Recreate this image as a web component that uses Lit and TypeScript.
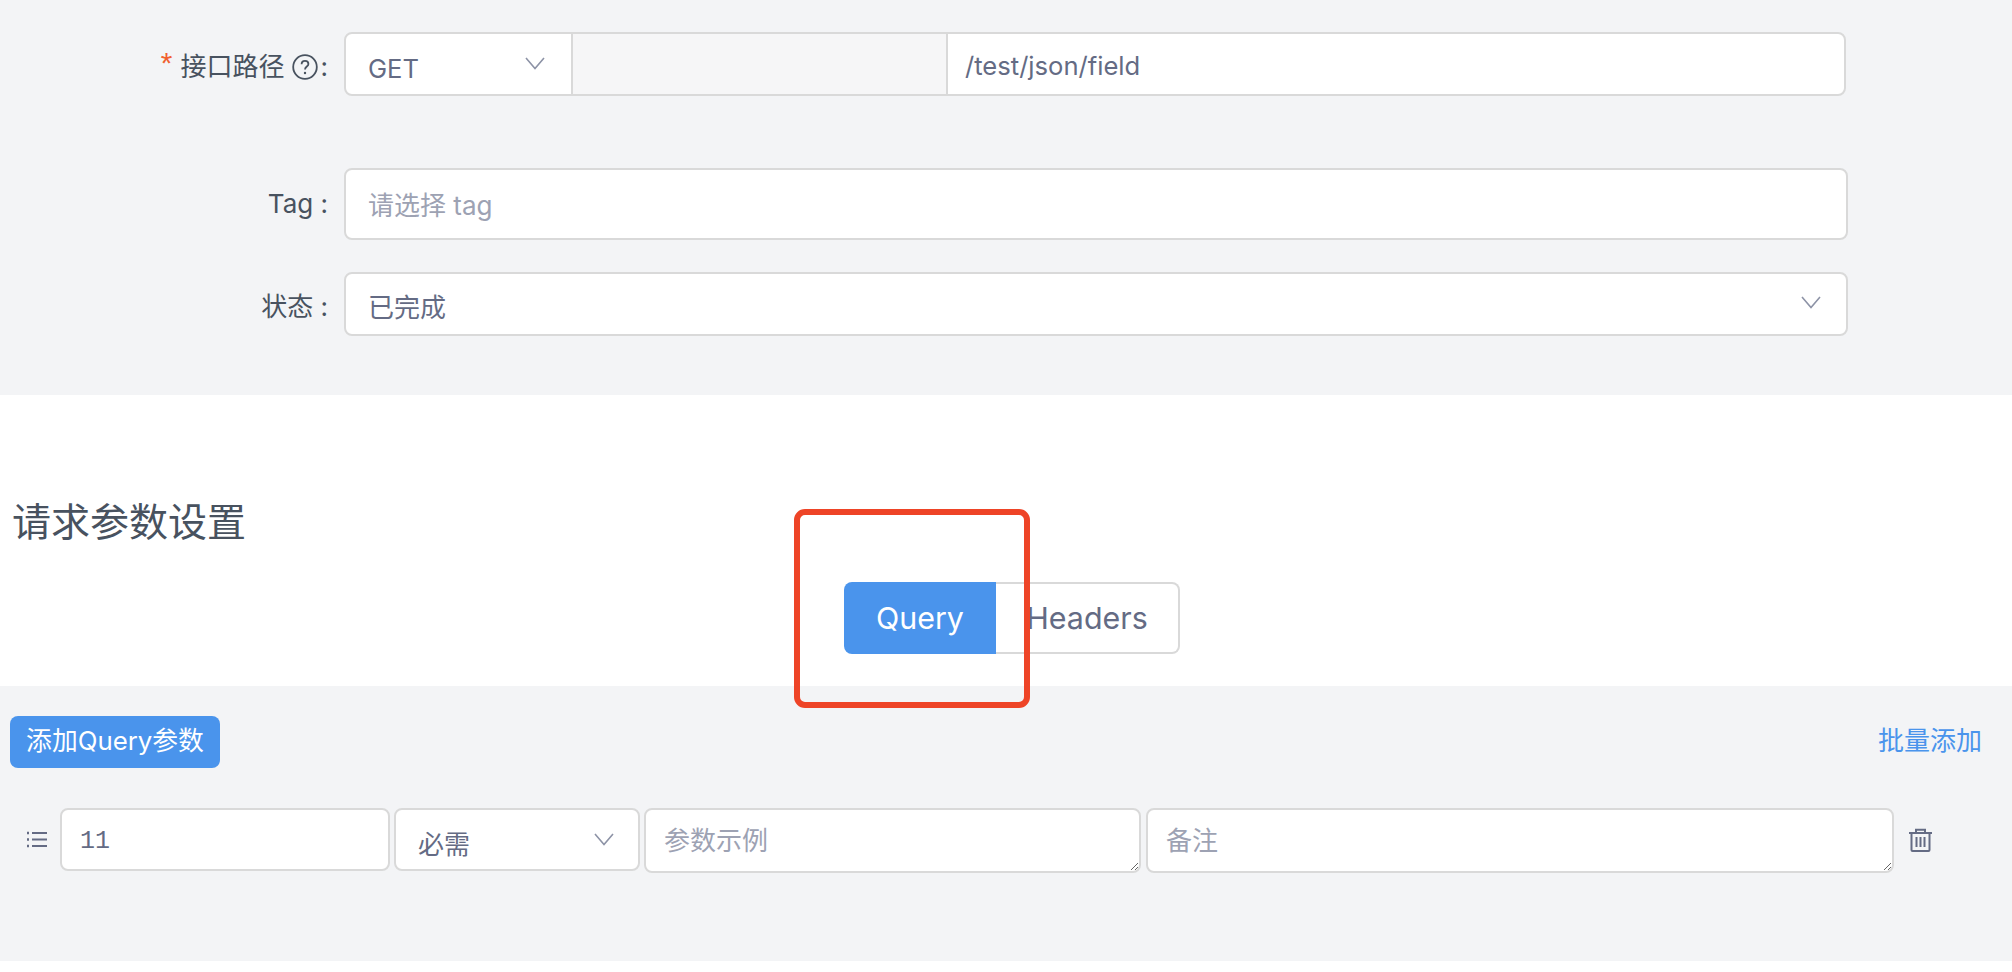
import { LitElement, html, css, svg } from "lit";
import { customElement } from "lit/decorators.js";

const chevron = html`<svg class="chev" width="20" height="13" viewBox="0 0 20 13" fill="none" stroke="#8d93a6" stroke-width="1.6"><path d="M1 1l9 10.5L19 1"/></svg>`;

@customElement("app-root")
export class AppRoot extends LitElement {
  static styles = css`
    :host {
      display: block;
      position: relative;
      height: 972px;
      overflow: hidden;
      background: #fff;
      font-family: Inter, "Noto Sans CJK SC", sans-serif;
      color: #646b84;
      font-size: 26px;
    }
    * { box-sizing: border-box; }
    .top {
      height: 395px;
      background: #f3f4f6;
      padding-top: 32px;
      display: flex;
      flex-direction: column;
    }
    .row { display: flex; align-items: center; }
    .row1 { height: 64px; }
    .row2 { height: 72px; margin-top: 72px; }
    .row3 { height: 64px; margin-top: 32px; }
    .label {
      width: 328px;
      margin-right: 16px;
      flex: none;
      display: flex;
      justify-content: flex-end;
      align-items: center;
      color: #48525f;
      font-size: 26px;
      line-height: 36px;
      white-space: nowrap;
    }
    .row1 .label { padding-top: 6px; }
    .row3 .label { padding-top: 6px; }
    .req { color: #f0602f; margin-right: 5px; font-size: 30px; line-height: 20px; font-family: "Liberation Mono", monospace; }
    .help { margin: 0 3px 0 7px; display: block; }
    .box {
      background: #fff;
      border: 2px solid #d9d9d9;
      border-radius: 8px;
      color: #646b84;
    }
    .group { width: 1502px; height: 64px; display: flex; overflow: hidden; }
    .method {
      width: 225px; flex: none; display: flex; justify-content: space-between;
      padding: 17px 26px 0 22px; line-height: 36px; font-size: 25.6px;
    }
    .method .chev { margin-top: 6px; }
    .prefix { width: 377px; flex: none; background: #f6f6f7; border-left: 2px solid #d9d9d9; border-right: 2px solid #d9d9d9; }
    .path {
      flex: 1; min-width: 0; border: 0; outline: 0; padding: 2px 17px 0; background: transparent;
      font: inherit; font-size: 25.6px; color: #646b84; height: 60px;
    }
    .wide { width: 1504px; }
    input.field, textarea.field {
      font: inherit; outline: 0; display: block;
    }
    input::placeholder, textarea::placeholder { color: #9da2b3; opacity: 1; }
    input.tag { height: 72px; padding: 2px 22px 0; }
    .sel {
      display: flex; justify-content: space-between; align-items: flex-start;
      height: 64px; line-height: 40px;
    }
    .status { padding: 14px 25px 0 22px; }
    .status .chev { margin-top: 8px; }
    .mid { height: 291px; display: flex; flex-direction: column; }
    h2 {
      margin: 0; padding: 101px 0 0 12px;
      font-size: 39px; line-height: 52px; font-weight: 400; color: #48525f;
    }
    .tabs { display: flex; margin: 34px 0 0 844px; }
    .tab {
      height: 72px; display: flex; align-items: center; justify-content: center;
      font-size: 30.4px; line-height: 40px;
    }
    .tab.on { width: 152px; background: #4a94ec; color: #fff; border-radius: 8px 0 0 8px; }
    .tab.off {
      width: 184px; background: #fff; color: #646b84;
      border: 2px solid #d9d9d9; border-left: 0; border-radius: 0 8px 8px 0;
    }
    .params { height: 275px; background: #f3f4f6; padding: 30px 0 0 0; }
    .bar { display: flex; justify-content: space-between; align-items: center; height: 52px; padding: 0 30px 0 10px; }
    .add {
      width: 210px; height: 52px; background: #4a94ec; color: #fff; border-radius: 8px;
      display: flex; align-items: center; justify-content: center; font-size: 25.8px; white-space: nowrap;
      padding-bottom: 8px;
    }
    .bulk { color: #4a94ec; font-size: 26px; padding-bottom: 8px; }
    .qrow { display: flex; align-items: flex-start; margin-top: 40px; padding-left: 27px; }
    .list { margin: 23px 13px 0 0; display: block; flex: none; }
    input.name {
      width: 330px; height: 63px; padding: 4px 18px 0; flex: none;
      font-family: "Liberation Mono", "Noto Sans CJK SC", monospace; font-size: 25px;
    }
    .req-sel { width: 246px; margin-left: 4px; height: 63px; padding: 15px 24px 0 22px; flex: none; }
    .req-sel .chev { margin-top: 8px; }
    textarea.field { height: 65px; padding: 11px 18px 0; line-height: 40px; resize: both; min-height: 0; flex: none; }
    .t1 { width: 497px; margin-left: 4px; }
    .t2 { width: 748px; margin-left: 5px; }
    .trash { margin: 20px 0 0 15px; display: block; flex: none; }
    .mark {
      position: absolute; left: 794px; top: 509px; width: 236px; height: 199px;
      border: 6px solid #ee4427; border-radius: 11px; pointer-events: none;
    }
  `;

  render() {
    return html`
      <section class="top">
        <div class="row row1">
          <div class="label"><span class="req">*</span>接口路径
            <svg class="help" width="26" height="26" viewBox="0 0 26 26" fill="none" stroke="#48525f" stroke-width="1.8"><circle cx="13" cy="13" r="11.800"/><path d="M9.6 10.2c0-2 1.5-3.4 3.4-3.4s3.4 1.3 3.4 3.1c0 2.6-3.4 2.7-3.4 5.6" stroke-width="1.8"/><circle cx="13" cy="19" r="1.2" fill="#48525f" stroke="none"/></svg>:</div>
          <div class="box group">
            <div class="method"><span>GET</span>${chevron}</div>
            <div class="prefix"></div>
            <input class="path" .value=${"/test/json/field"} />
          </div>
        </div>
        <div class="row row2">
          <div class="label">Tag&nbsp;:</div>
          <input class="box field wide tag" placeholder="请选择 tag" />
        </div>
        <div class="row row3">
          <div class="label">状态&nbsp;:</div>
          <div class="box wide sel status"><span>已完成</span>${chevron}</div>
        </div>
      </section>
      <section class="mid">
        <h2>请求参数设置</h2>
        <div class="tabs">
          <div class="tab on">Query</div>
          <div class="tab off">Headers</div>
        </div>
      </section>
      <section class="params">
        <div class="bar">
          <div class="add">添加Query参数</div>
          <div class="bulk">批量添加</div>
        </div>
        <div class="qrow">
          <svg class="list" width="20" height="17" viewBox="0 0 20 17" fill="none" stroke="#646b84" stroke-width="2"><path d="M5 2h15M5 8.500h15M5 15h15"/><path d="M0 2h2M0 8.500h2M0 15h2" stroke-width="2.400"/></svg>
          <input class="box field name" .value=${"11"} />
          <div class="box sel req-sel"><span>必需</span>${chevron}</div>
          <textarea class="box field t1" placeholder="参数示例"></textarea>
          <textarea class="box field t2" placeholder="备注"></textarea>
          <svg class="trash" width="23" height="24" viewBox="0 0 23 24" fill="none" stroke="#646b84" stroke-width="2">
            ${svg`<path d="M0 5h23M7 5V1.800h9V5"/><path d="M2.500 5v17a1 1 0 0 0 1 1h16a1 1 0 0 0 1-1V5"/><path d="M7.500 9v10M11.500 9v10M15.500 9v10"/>`}
          </svg>
        </div>
      </section>
      <div class="mark"></div>
    `;
  }
}
